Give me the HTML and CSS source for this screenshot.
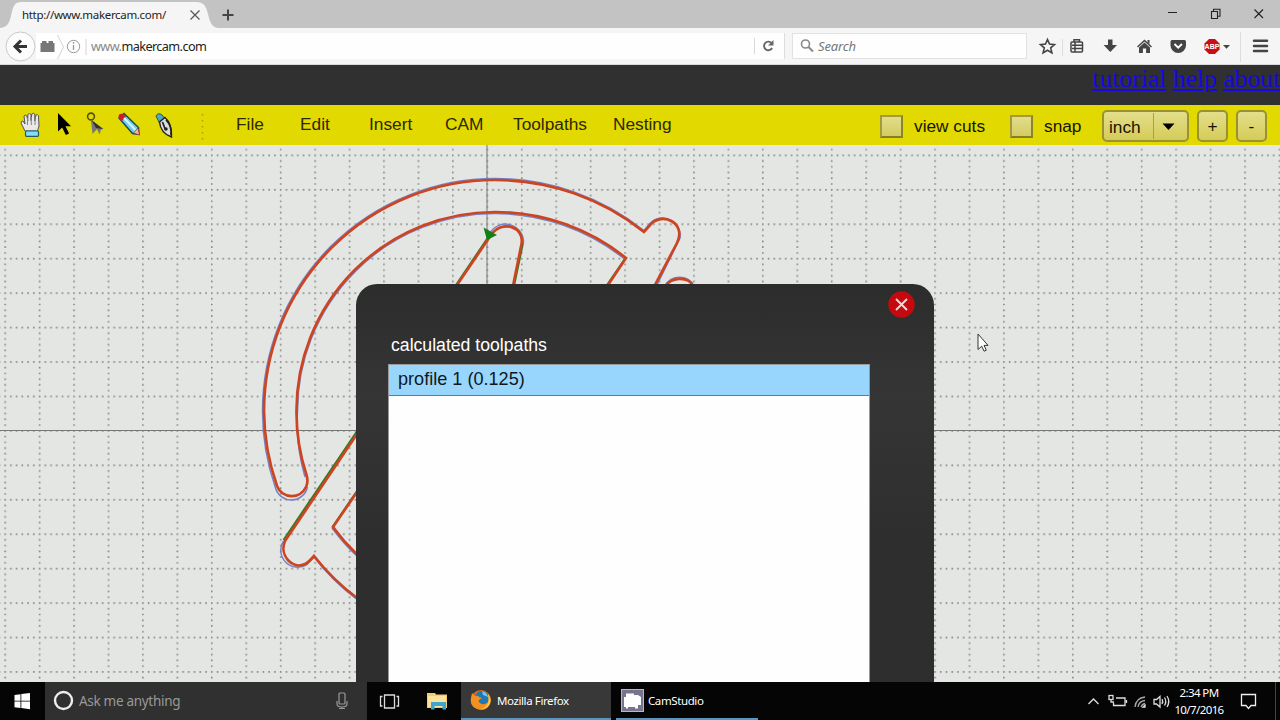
FILE: index.html
```html
<!DOCTYPE html>
<html lang="en">
<head>
<meta charset="utf-8">
<title>makercam</title>
<link rel="stylesheet" href="styles.css">
</head>
<body>
<div class="screen">
  <header class="tabs">
    <div class="tab">
      <svg class="tab-shape" width="218" height="27" viewBox="0 0 218 27"><path d="M0 27C8 26 9 22 11 15C13 6 14 1 21 1H196C204 1 206 5 208 13C210 22 212 26 218 27Z" fill="#f4f5f4"/></svg>
      <span class="tab-title">http://www.makercam.com/</span>
      <svg class="tab-close" width="10" height="10" viewBox="0 0 10 10"><path d="M.5.5l9 9M9.500 .5l-9 9" stroke="#555" stroke-width="1.200"/></svg>
    </div>
    <svg class="newtab" width="12" height="12" viewBox="0 0 12 12"><path d="M6 .5v11M.5 6h11" stroke="#444" stroke-width="2"/></svg>
    <svg class="winbtns" width="100" height="14" viewBox="0 0 100 14"><g fill="none" stroke="#222" stroke-width="1.100"><path d="M2 6.500h9M45.500 5.500h6v7h-6zM47.500 5.300v-2h6.500v7h-2.300M88.500 3.500l8.500 8.500M97 3.500l-8.500 8.500"/></g></svg>
  </header>

  <div class="navbar">
    <div class="url">
      <svg class="url-icons" width="90" height="34" viewBox="0 0 90 34">
        <circle cx="20" cy="17.500" r="14.500" fill="#fbfcfb" stroke="#c9c9c9"/>
        <path d="M26.500 17.500H15M20.500 11.500l-6 6 6 6" fill="none" stroke="#333" stroke-width="3"/>
        <path d="M40 14h1.500v-2h4.500v2h2v-2h4.500v2H54v9H40z" fill="#777"/>
        <path d="M57 6l6 12-6 12" fill="none" stroke="#d4d4d4"/>
        <circle cx="73" cy="17.500" r="6.200" fill="none" stroke="#999"/>
        <path d="M73 16v5M73 13v1.700" stroke="#999" stroke-width="1.300"/>
        <path d="M85.500 10v16" stroke="#d4d4d4"/>
      </svg>
      <span class="address"><i>www.</i>makercam.com</span>
      <svg class="reload" width="32" height="26" viewBox="0 0 32 26"><path d="M1.500 5v16" stroke="#d8d8d8"/><path d="M18.500 10a4.300 4.300 0 1 0 .6 5" fill="none" stroke="#666" stroke-width="1.900"/><path d="M20.500 7v5.500h-5.500z" fill="#666"/></svg>
    </div>
    <div class="search">
      <svg width="14" height="14" viewBox="0 0 14 14"><circle cx="5.500" cy="5" r="4" fill="none" stroke="#888" stroke-width="1.600"/><path d="M8.500 8l4.500 4.500" stroke="#888" stroke-width="2"/></svg>
      <span>Search</span>
    </div>
    <svg class="nav-icons" width="248" height="34" viewBox="0 0 248 34">
      <path d="M15.500 10.500l2 4.600 5 .5-3.800 3.300 1.200 5-4.400-2.700-4.400 2.700 1.200-5-3.800-3.300 5-.5z" fill="none" stroke="#444" stroke-width="1.600"/>
      <path d="M30.500 10v17M208.500 3v30" stroke="#ddd"/>
      <g fill="none" stroke="#444" stroke-width="1.500"><rect x="39" y="13" width="11.500" height="10" rx="1"/><path d="M42 13v-2.300h5.500V13M40 16.300h10.500M40 19.600h10.500M43 13v10"/></g>
      <path d="M76 10.500h4.500V16h4.500l-6.700 7-6.700-7h4.400z" fill="#444"/>
      <path d="M105 17.500l7.500-7 7.500 7-1 1-6.500-6-6.500 6zM107 18.500l5.500-5 5.500 5v5.500h-3.900v-4.500h-3.200v4.500h-3.900zM115.500 11h2v4l-2-2z" fill="#444"/>
      <path d="M138.500 12.500q0-1.500 1.500-1.500h12.500q1.500 0 1.500 1.500v4a7.700 7.500 0 0 1-15.500 0z" fill="#444"/>
      <path d="M142.500 15l3.700 3.700 3.700-3.700" fill="none" stroke="#fff" stroke-width="1.900"/>
      <path d="M177 10h6l4.500 4.500v6l-4.500 4.500h-6l-4.500-4.500v-6z" fill="#c90d16"/>
      <text x="180" y="20.200" class="abp">ABP</text>
      <path d="M191 16h7l-3.500 3.700z" fill="#444"/>
      <path d="M222 11.800h13M222 16.900h13M222 22h13" stroke="#444" stroke-width="2.500" stroke-linecap="round"/>
    </svg>
  </div>

  <div class="links"><a href="#">tutorial</a> <a href="#">help</a> <a href="#">about</a></div>

  <div class="toolbar">
    <svg class="tools" width="210" height="40" viewBox="0 0 210 40">
      <path d="M25 26l-4-8q0-2 2-2l2 3-1-8q1-2 2.900 0l.9 5V9.500q1.500-1.800 3.200 0v6l.8-6.500q1.500-1.500 3 0l-.1 7 1.300-6q1.700-1 2.500 .5L39 21l-1.500 5z" fill="#e9e9e9" stroke="#555" stroke-width="1"/>
      <path d="M27.500 13v7M31.300 12v8M35 12v8" stroke="#888" stroke-width="1"/>
      <rect x="25.500" y="26" width="13" height="5.300" rx="1" fill="#82dff5" stroke="#245b66" stroke-width="1.200"/>
      <path d="M58 8v18.500l4.200-4 3.600 7.500 3.300-1.500-3.600-7.300h5.500z" fill="#000"/>
      <circle cx="91" cy="11.500" r="3.400" fill="none" stroke="#55500a" stroke-width="1.600"/>
      <path d="M91 15l1.500 14 4.500-5 2.500 5.500 1.500-5 2.500-.5z" fill="#777"/><path d="M91.500 15l11.500 9-7-1z" fill="#333"/>
      <path d="M119 13l5-4.500 14.500 14 .5 7-6.500-1z" fill="#70cdea" stroke="#15485c" stroke-width="1.400"/>
      <path d="M119 14q-2-6 4.500-5l2.500 2.500-4.500 5z" fill="#c91f29"/>
      <path d="M124 13l11.500 12" stroke="#d7f5ff" stroke-width="2"/><path d="M133.500 28l4.500-5 1.500 7z" fill="#efbd9c" stroke="#a22" stroke-width=".7"/>
      <path d="M156 11q2-4 6-1l2.500 3-5 5z" fill="#4aadc0" stroke="#28535a"/>
      <path d="M159.500 17l5.500-4.500q7 6 6.500 19.500-11-4-12-15z" fill="#ddd" stroke="#222" stroke-width="1.400"/>
      <path d="M162.500 17l3 8M166 15q6 6 5 15" fill="none" stroke="#222" stroke-width="1.700"/><circle cx="166" cy="24" r="1.700" fill="#222"/>
      <path d="M202.500 9v27" stroke="#aaa20a" stroke-width="1.500" stroke-dasharray="1.500 4.500"/>
    </svg>
    <nav class="menu">
      <span class="m-file">File</span><span class="m-edit">Edit</span><span class="m-insert">Insert</span><span class="m-cam">CAM</span><span class="m-tool">Toolpaths</span><span class="m-nest">Nesting</span>
    </nav>
    <div class="options">
      <span class="box"></span><span class="lab-view">view cuts</span>
      <span class="box"></span><span class="lab-snap">snap</span>
      <span class="select"><b>inch</b><svg width="34" height="28" viewBox="0 0 34 28"><path d="M.5 1v26" stroke="#aaa04a"/><path d="M9.500 11.500h12l-6 6.500z" fill="#000"/></svg></span>
      <span class="btn plus">+</span><span class="btn">-</span>
    </div>
  </div>

  <main class="stage">
    <svg class="drawing" width="1280" height="537" viewBox="0 145 1280 537">
      <defs>
        <pattern id="grid" x="486.500" y="430" width="34.440" height="34.440" patternUnits="userSpaceOnUse">
          <g stroke="#858785" stroke-width="1.600" stroke-dasharray="1.600 4.140"><path d="M0 .8H34.440M.8 0V34.440"/></g>
        </pattern>
      </defs>
      <rect y="145" width="1280" height="537" fill="url(#grid)"/>
      <path d="M0 430.500H1280M487 145V682" stroke="#777" stroke-width="1"/>
      <g fill="none" stroke="#7482c8" stroke-width="1.500">
        <path d="M644 230.500A239 239 0 0 0 495 178.500A232.500 232.500 0 0 0 262.500 411A232.500 232.500 0 0 0 275.500 488A16.500 16.500 0 0 0 307.500 487M305 477A197.500 197.500 0 0 1 297.500 411A197.500 197.500 0 0 1 495 213.500A208 208 0 0 1 624.500 259"/>
        <path d="M644 230.500L650 223.500A17.500 17.500 0 0 1 680 238L656.500 286M665 286A16.500 16.500 0 0 1 694 286"/>
        <path d="M490 233A18 18 0 0 1 523.500 243M283.500 541A17 17 0 0 0 307 564.500L314 557A232.500 232.500 0 0 0 357 599.500M332 528A197.500 197.500 0 0 0 358 557"/>
      </g>
      <g fill="none" stroke="#2c7c22" stroke-width="2"><path d="M456 285L491 233M523 243L514 286M607 285L625.500 258M356.500 432L283.500 540M357 491L332.500 527"/></g>
      <g fill="none" stroke="#cc4420" stroke-width="2.700" stroke-linejoin="miter">
        <path d="M608 285L626 258A209.500 209.500 0 0 0 495 212A198.500 198.500 0 0 0 296.500 411A198.500 198.500 0 0 0 306.500 475C308 480 308 483 306 487A15.800 15.800 0 0 1 277 486A231 231 0 0 1 264 411A231 231 0 0 1 495 180A238 238 0 0 1 644 232L650 225C662 211 687 223 677 243L654.500 286"/>
        <path d="M457 285L491 235C502 219 525 227 521.500 244L513 286M666 286C669 278 688 275 693 286"/>
        <path d="M357 434L285 541C279 555 292 570 305 564Q308 563 314 556A231 231 0 0 0 357 598M357 492L333 527A199 199 0 0 0 357 554.500"/>
      </g>
      <path d="M483.500 227.500L497 235L487 240z" fill="#118016"/>
      <path d="M978 334v15.500l3.700-3.300 2.400 5 2.200-1-2.300-4.800h4z" fill="#fff" stroke="#333" stroke-width="1"/>
    </svg>
    <section class="dialog">
      <svg class="close" width="27" height="27" viewBox="0 0 27 27"><circle cx="13.500" cy="13.500" r="13.200" fill="#c40a0e"/><path d="M8 8l11 11M19 8L8 19" stroke="#f7d5d5" stroke-width="1.900"/></svg>
      <h1>calculated toolpaths</h1>
      <div class="list"><div class="row">profile 1 (0.125)</div></div>
    </section>
  </main>

  <footer class="taskbar">
    <svg class="start" width="45" height="38" viewBox="0 0 45 38"><path d="M14.500 13l6-.8v6.500h-6zM21.300 12.100l8.700-1.200v7.800h-8.700zM14.500 19.500h6V26l-6-.8zM21.300 19.500H30v7.700l-8.700-1.200z" fill="#fff"/></svg>
    <div class="cortana">
      <svg width="22" height="22" viewBox="0 0 22 22"><circle cx="10.500" cy="10.500" r="8.500" fill="none" stroke="#eee" stroke-width="2.400"/></svg>
      <span>Ask me anything</span>
      <svg class="mic" width="12" height="18" viewBox="0 0 12 18"><g fill="none" stroke="#999" stroke-width="1.200"><rect x="3" y="1" width="6" height="11" rx="1"/><path d="M1 9v3q0 3 5 3t5-3V9M6 15v2M3 16.500h6"/></g></svg>
    </div>
    <svg class="quick" width="94" height="38" viewBox="0 0 94 38">
      <path d="M17.500 13h10v13h-10zM15.500 14.500h-2v9.500h2M29.500 14.500h2v9.500h-2" fill="none" stroke="#ddd" stroke-width="1.300"/>
      <path d="M60 11h8l1 1.500h11V26H60z" fill="#efd071"/><path d="M61 14h18v11H61z" fill="#ffe29a"/><path d="M64 20h15v7.500h-3.500v-3.500h-8v3.500H64z" fill="#3ea5cf"/>
    </svg>
    <div class="task firefox">
      <svg width="22" height="22" viewBox="0 0 22 22"><circle cx="11" cy="11" r="10" fill="#e66a15"/><circle cx="12" cy="9" r="7.200" fill="#2277b5"/><path d="M12 2q5 1 6 6l-5-2z" fill="#72c5e7"/><path d="M2 4l3 3q3-1 4 1l3 1-3 2q-1 3 3 4 6 1 8-6 1 11-8 12Q-1 20 1 9z" fill="#f39022"/><path d="M18 5q3 3 2.500 8-2 7-9 7 7-3 7-9z" fill="#ffc83b"/></svg>
      <span>Mozilla Firefox</span>
    </div>
    <div class="task cam">
      <svg width="23" height="23" viewBox="0 0 23 23"><rect width="23" height="23" fill="#77758e"/><rect x=".5" y=".5" width="22" height="22" fill="none" stroke="#b9b7c8"/><path d="M5 4.500h8V6h4l3 2v8h-3v3.500h-3V18H7v1.500H5V18H3V8h2z" fill="#fff"/></svg>
      <span>CamStudio</span>
    </div>
    <svg class="tray" width="90" height="38" viewBox="0 0 90 38"><g fill="none" stroke="#ddd" stroke-width="1.300">
      <path d="M6.500 22l5-5 5 5"/><path d="M34 16h9v7.500H31.500v-3M44.500 18v3"/><rect x="27" y="13.500" width="4" height="4"/><path d="M29 17.500v2.500h3"/>
      <path d="M53 25q1-9 10-10M56 25q1-6 7-6.500M59 25q1-3 4-3.500" stroke="#aaa"/><path d="M61 25h2v-2z" fill="#fff"/>
      <path d="M72 17.500h2.500l3.500-3v10.500l-3.500-3H72zM80 17q1.500 2.500 0 5M82.500 15.500q2.500 4 0 8M85 14q3.500 5.500 0 11"/>
    </g></svg>
    <div class="clock"><div>2:34 PM</div><div>10/7/2016</div></div>
    <svg class="notes" width="54" height="38" viewBox="0 0 54 38"><path d="M15.500 12.500h14v11h-4.500l-2.500 3-2.500-3h-4.500z" fill="none" stroke="#eee" stroke-width="1.300"/><path d="M49.500 0v38" stroke="#444"/></svg>
  </footer>
</div>
</body>
</html>
```
FILE: styles.css
```css
* { box-sizing: border-box; }
body { margin: 0; overflow: hidden; }
svg { display: block; flex: none; }
.screen { width: 1280px; height: 720px; display: flex; flex-direction: column; overflow: hidden; background: #e4e6e4; font-family: "Liberation Sans", Arial, sans-serif; }
.screen > * { flex: none; }

.tabs { height: 28px; display: flex; background: #c3c3c3; font-family: "Noto Sans", sans-serif; }
.tab { position: relative; width: 218px; height: 28px; padding: 1px 0 0 22px; display: flex; align-items: center; }
.tab-shape { position: absolute; left: 0; top: 1px; }
.tab-title { position: relative; width: 168px; font-size: 11.500px; letter-spacing: -.32px; color: #222; white-space: nowrap; }
.tab-close { position: relative; }
.newtab { margin: 9px 0 0 4px; }
.winbtns { margin: 6px 14px 0 auto; }

.navbar { height: 37px; display: flex; padding-top: 1px; background: #f4f5f4; border-bottom: 1px solid #dadada; font-family: "Noto Sans", sans-serif; }
.url { width: 785px; height: 26px; margin-top: 4px; display: flex; align-items: center; background: linear-gradient(90deg, transparent 36px, #fdfefd 36px); box-shadow: inset -1px 0 #ddd; }
.url-icons { width: 91px; margin-top: -1px; }
.address { font-size: 12.700px; letter-spacing: -.6px; color: #222; width: 662px; }
.address i { font-style: normal; color: #888; }
.search { width: 235px; height: 26px; margin: 4px 0 0 7px; padding-left: 7px; display: flex; align-items: center; gap: 4px; background: #fdfefd; border: 1px solid #e2e2e2; font-size: 13px; letter-spacing: -.15px; font-style: italic; color: #777; }
.nav-icons { margin: 0 0 0 5px; }
.abp { font: bold 7px "Liberation Sans", sans-serif; fill: #fff; text-anchor: middle; }

.links { height: 40px; background: #303030; text-align: right; font: 25.600px/27px "Liberation Serif", serif; white-space: nowrap; }
.links a { color: #1608e0; }

.toolbar { height: 40px; display: flex; background: #e2d900; color: #2c2800; font-size: 17.300px; }
.menu { display: flex; width: 644px; padding: 8px 0 0 26px; line-height: 22px; }
.menu span { flex: none; }
.m-file { width: 64px; }
.m-edit { width: 69px; }
.m-insert { width: 76px; }
.m-cam { width: 68px; }
.m-tool { width: 100px; }
.options { display: flex; align-items: center; padding-left: 26px; padding-top: 3px; color: #161300; }
.box { width: 23px; height: 23px; margin-top: -1px; border: 2px solid #a39a3c; border-right-color: #8b842c; border-bottom-color: #857d2a; background: linear-gradient(#e2dd8a, #d3cc62); }
.lab-view { width: 86px; padding-left: 11px; margin-right: 21px; white-space: nowrap; }
.lab-snap { width: 69px; padding-left: 11px; }
.select { display: flex; width: 87px; height: 32px; margin-top: -1px; border: 2px solid #9a9132; border-radius: 5px; background: linear-gradient(#e3de8a, #d4cc58); align-items: center; }
.select b { width: 49px; padding: 2px 0 0 5px; font-weight: normal; }
.btn { width: 31px; height: 32px; margin: -1px 0 0 8px; border: 2px solid #9a9132; border-radius: 5px; background: linear-gradient(#e3de8a, #d4cc58); text-align: center; line-height: 29px; }

.stage { position: relative; height: 537px; overflow: hidden; background: #e4e6e4; }
.dialog { position: absolute; left: 356px; top: 139px; width: 578px; height: 430px; padding: 7px 65px 0 32px; border-radius: 21px 21px 0 0; background: linear-gradient(#2c2c2c, #353535 110px, #2e2e2e 260px); }
.close { margin-left: auto; margin-right: -46px; }
.dialog h1 { margin: 17px 0 0 3px; height: 29px; font-size: 17.650px; line-height: 20px; font-weight: normal; color: #fff; }
.list { height: 340px; width: 482px; background: #fdfefd; border: 1px solid #999; }
.row { height: 31px; padding-left: 9px; line-height: 29px; font-size: 18.100px; background: #98d6fe; border-bottom: 1px solid #667b88; color: #10181e; }

.taskbar { height: 38px; display: flex; background: #050505; color: #fff; font-family: "Noto Sans", sans-serif; font-size: 11.500px; letter-spacing: -.4px; }
.cortana { width: 322px; display: flex; align-items: center; padding-left: 8px; background: #303030; color: #999; font-size: 13.500px; letter-spacing: -.3px; }
.cortana span { width: 261px; padding-left: 4px; }
.task { height: 38px; display: flex; align-items: center; gap: 5px; border-bottom: 2px solid #5796bf; white-space: nowrap; }
.firefox { width: 150px; padding-left: 9px; background: #383838; }
.cam { width: 142px; margin-left: 5px; padding-left: 5px; gap: 4px; }
.tray { margin-left: auto; }
.clock { width: 54px; padding-top: 2px; text-align: center; line-height: 17px; letter-spacing: -.6px; white-space: nowrap; }
.notes { width: 54px; }
```
